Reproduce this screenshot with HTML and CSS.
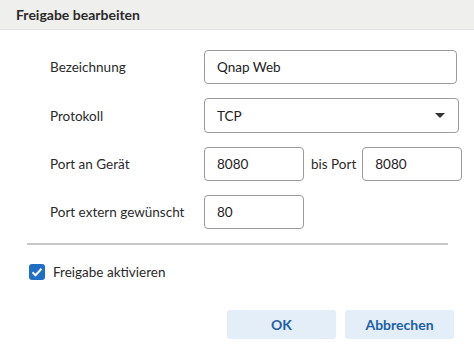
FILE: index.html
```html
<!DOCTYPE html>
<html lang="de">
<head>
    <meta charset="UTF-8">
    <title>Freigabe bearbeiten</title>
    <link rel="stylesheet" href="styles.css">
</head>
<body>
    <div class="dialog">
        <div class="dialog-header">Freigabe bearbeiten</div>
        <form class="dialog-body">
            <div class="fields">
                <label class="field-label" for="name">Bezeichnung</label>
                <div class="field"><input type="text" id="name" class="input wide" value="Qnap Web"></div>

                <label class="field-label" for="proto">Protokoll</label>
                <div class="field">
                    <div class="select">
                        <span>TCP</span>
                        <svg width="10" height="6" viewBox="0 0 10 6"><path d="M0 0h10L5 5z" fill="#333"/></svg>
                    </div>
                </div>

                <label class="field-label" for="port">Port an Gerät</label>
                <div class="field">
                    <input type="text" id="port" class="input small" value="8080">
                    <span class="bis">bis Port</span>
                    <input type="text" class="input small" value="8080">
                </div>

                <label class="field-label" for="ext">Port extern gewünscht</label>
                <div class="field"><input type="text" id="ext" class="input small" value="80"></div>
            </div>

            <hr class="divider">

            <label class="check">
                <span class="checkbox">
                    <svg width="12" height="10" viewBox="0 0 12 10"><path d="M1.5 5.2l3 3L10.5 1.8" fill="none" stroke="#fff" stroke-width="2"/></svg>
                </span>
                Freigabe aktivieren
            </label>

            <div class="actions">
                <button type="button" class="btn">OK</button>
                <button type="button" class="btn">Abbrechen</button>
            </div>
        </form>
    </div>
</body>
</html>
```

FILE: styles.css
```css
body {
    margin: 0;
    font-family: "Lato", "Noto Sans", sans-serif;
    font-size: 13.5px;
    color: #222;
    background: #fff;
}
.dialog {
    width: 474px;
    height: 352px;
}
.dialog-header {
    height: 29px;
    line-height: 29px;
    padding-left: 16px;
    background: #efefed;
    border-bottom: 1px solid #e2e2e0;
    font-weight: bold;
    font-size: 14px;
    color: #2a2a2a;
}
.dialog-body {
    padding: 20px 0 0 27px;
}
.fields {
    display: grid;
    grid-template-columns: 154px auto;
    row-gap: 14px;
    padding-left: 23px;
    align-items: center;
}
.field-label {
    color: #2a2a2a;
}
.field {
    display: flex;
    align-items: center;
}
.input {
    box-sizing: border-box;
    height: 34px;
    border: 1px solid #9c9c9c;
    border-radius: 4px;
    padding: 0 12px;
    font-family: inherit;
    font-size: 13.5px;
    color: #222;
    background: #fff;
}
.wide {
    width: 253px;
}
.small {
    width: 100px;
}
.select {
    box-sizing: border-box;
    width: 255px;
    height: 35px;
    border: 1px solid #9c9c9c;
    border-radius: 4px;
    padding: 0 13px 0 12px;
    display: flex;
    align-items: center;
    justify-content: space-between;
}
.bis {
    margin: 0 6px 0 7px;
    white-space: nowrap;
    color: #2a2a2a;
}
.divider {
    width: 421px;
    margin: 14px 0 0 0;
    border: 0;
    border-top: 2px solid #c8c8c8;
}
.check {
    display: flex;
    align-items: center;
    gap: 8px;
    margin: 19px 0 0 2px;
    color: #2a2a2a;
}
.checkbox {
    width: 16px;
    height: 16px;
    border-radius: 3px;
    background: #1f6fc5;
    display: flex;
    align-items: center;
    justify-content: center;
}
.actions {
    display: flex;
    justify-content: flex-end;
    gap: 9px;
    margin-top: 30px;
    padding-right: 20px;
}
.btn {
    width: 109px;
    height: 29px;
    border: 0;
    border-radius: 3px;
    background: #e4eef8;
    color: #1d5fa8;
    font-family: inherit;
    font-weight: bold;
    font-size: 14px;
}
```
